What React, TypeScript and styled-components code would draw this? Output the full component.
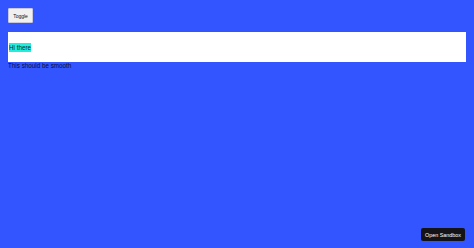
import React, { useState } from 'react';
import styled, { createGlobalStyle } from 'styled-components';

const GlobalStyle = createGlobalStyle`
  html, body {
    height: 100%;
  }

  body {
    margin: 8px;
    background: #3355ff;
    font-family: "Liberation Sans", Arial, sans-serif;
    font-size: 6.3px;
    color: #0b0b2e;
  }
`;

const ToggleButton = styled.button`
  display: block;
  width: 25px;
  height: 15px;
  padding: 0;
  margin: 0;
  background: #f0f0f0;
  border: 1px solid #c8c8d8;
  border-radius: 1px;
  font-family: "Liberation Sans", Arial, sans-serif;
  font-size: 5px;
  color: #111;
  cursor: pointer;
`;

const Panel = styled.div<{ $open: boolean }>`
  display: flex;
  align-items: center;
  box-sizing: border-box;
  margin-top: 9px;
  height: ${({ $open }) => ($open ? '30px' : '0')};
  overflow: hidden;
  background: #ffffff;
  transition: height 0.3s ease;
`;

const Highlight = styled.span`
  margin-left: 1px;
  padding: 1px 0;
  line-height: 7px;
  background: #22eedd;
  color: #0a1a30;
`;

const Caption = styled.p`
  margin: 0;
  line-height: 8px;
`;

const SandboxLink = styled.a`
  position: fixed;
  right: 9px;
  bottom: 7px;
  display: flex;
  align-items: center;
  justify-content: center;
  width: 44px;
  height: 13px;
  background: #141418;
  border-radius: 2px;
  color: #ffffff;
  font-size: 5.4px;
  text-decoration: none;
`;

export default function App() {
  const [open, setOpen] = useState(true);

  return (
    <>
      <GlobalStyle />
      <ToggleButton onClick={() => setOpen(!open)}>Toggle</ToggleButton>
      <Panel $open={open}>
        <Highlight>Hi there</Highlight>
      </Panel>
      <Caption>This should be smooth</Caption>
      <SandboxLink href="#">Open Sandbox</SandboxLink>
    </>
  );
}
